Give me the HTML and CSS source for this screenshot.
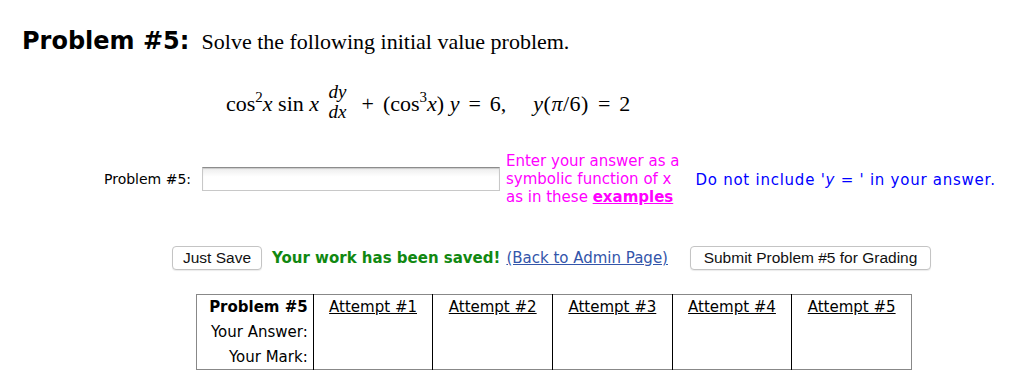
FILE: index.html
```html
<!DOCTYPE html>
<html lang="en">
<head>
<meta charset="UTF-8" />
<title>Problem #5</title>
<link rel="stylesheet" href="styles.css">
</head>
<body>

<div class="page">
  <h1 class="title"><span class="num">Problem #5:</span> <span class="lead">Solve the following initial value problem.</span></h1>

  <div class="equation">cos<sup>2</sup><i>x</i> sin <i>x</i> <span class="frac"><i>dy</i><br><i>dx</i></span><span class="op">+</span>(cos<sup>3</sup><i>x</i>) <i>y</i><span class="op">=</span>6,<span class="cond"><i>y</i>(<i>π</i>/6)</span><span class="op">=</span>2</div>

  <div class="answer-row">
    <label class="answer-label" for="ans">Problem #5:</label>
    <input class="answer-input" id="ans" type="text">
    <div class="hint">Enter your answer as a<br>symbolic function of x<br>as in these <a href="#">examples</a></div>
    <div class="note">Do not include '<i>y</i> = ' in your answer.</div>
  </div>

  <div class="actions">
    <button class="btn btn-save">Just Save</button>
    <span class="saved">Your work has been saved!</span>
    <a class="admin" href="#">(Back to Admin Page)</a>
    <button class="btn btn-submit">Submit Problem #5 for Grading</button>
  </div>

  <table class="attempts">
    <tr>
      <th>Problem #5</th>
      <td><a href="#">Attempt #1</a></td>
      <td><a href="#">Attempt #2</a></td>
      <td><a href="#">Attempt #3</a></td>
      <td><a href="#">Attempt #4</a></td>
      <td><a href="#">Attempt #5</a></td>
    </tr>
    <tr>
      <th class="sub">Your Answer:</th>
      <td></td><td></td><td></td><td></td><td></td>
    </tr>
    <tr>
      <th class="sub">Your Mark:</th>
      <td></td><td></td><td></td><td></td><td></td>
    </tr>
  </table>
</div>

</body>
</html>
```

FILE: styles.css
```css
* {
  margin: 0; padding: 0; box-sizing: border-box;
}
html, body {
  background: #fff;
  color: #000;
  font-family: "DejaVu Sans", Verdana, sans-serif;
}
.page {
  padding-top: 23px;
}

/* heading */
.title {
  padding-left: 22px;
  font-weight: normal;
  line-height: 30px;
  white-space: nowrap;
}
.title .num {
  font-weight: bold;
  font-size: 24px;
}
.title .lead {
  margin-left: 2px;
  font-family: "Liberation Serif", "Times New Roman", serif;
  font-size: 22px;
}

/* equation */
.equation {
  margin: 25px 0 0 226px;
  font-family: "Liberation Serif", "Times New Roman", serif;
  font-size: 22px;
  line-height: 44px;
  height: 44px;
  white-space: nowrap;
}
.equation sup {
  font-size: 15px;
  vertical-align: 9px;
  line-height: 0;
}
.frac {
  display: inline-block;
  vertical-align: middle;
  text-align: center;
  font-size: 19px;
  line-height: 20px;
  margin: 0 6px 0 4px;
  position: relative;
  top: -4px;
}
.equation .op {
  margin: 0 9px;
}
.equation .cond {
  margin-left: 27px;
  letter-spacing: 0.5px;
}

/* answer row */
.answer-row {
  margin-top: 24px;
  display: flex;
  align-items: center;
  padding-left: 104px;
  height: 58px;
}
.answer-label {
  font-size: 14px;
  width: 98px;
}
.answer-input {
  width: 298px;
  height: 24px;
  border: 1px solid #c8c8c8;
  border-top-color: #8c8c8c;
  background: linear-gradient(#ececec, #fff 40%);
  box-shadow: inset 0 1px 1px rgba(0, 0, 0, 0.15);
}
.hint {
  margin-left: 6px;
  color: #ff00ff;
  font-size: 15px;
  line-height: 18px;
  white-space: nowrap;
}
.hint a {
  color: #ff00ff;
  font-weight: bold;
}
.note {
  margin-left: 16px;
  margin-top: 2px;
  color: #0000ff;
  font-size: 15px;
  letter-spacing: 0.75px;
  white-space: nowrap;
}

/* buttons */
.actions {
  margin-top: 38px;
  padding-left: 172px;
  display: flex;
  align-items: center;
}
.btn {
  font-family: "Liberation Sans", Arial, sans-serif;
  font-size: 15.5px;
  height: 24px;
  padding: 0 9px;
  background: #fff;
  border: 1px solid #c4c4c4;
  border-radius: 4px;
  box-shadow: 0 1px 1px rgba(0, 0, 0, 0.08);
  color: #111;
}
.btn-save {
  width: 90px;
}
.btn-submit {
  width: 241px;
  margin-left: 22px;
}
.saved {
  margin-left: 10px;
  color: #118811;
  font-weight: bold;
  font-size: 15px;
}
.admin {
  margin-left: 6px;
  color: #3355aa;
  font-size: 15px;
}

/* attempts table */
.attempts {
  margin: 24px 0 0 196px;
  border-collapse: collapse;
  border: 1px solid #888;
  font-size: 15px;
  width: 716px;
}
.attempts th,
.attempts td {
  height: 25px;
  padding: 0 5px;
  border-left: 1px solid #000;
  text-align: center;
  vertical-align: middle;
  width: 120px;
}
.attempts th {
  width: 117px;
  text-align: right;
  border-left: none;
}
.attempts th.sub {
  font-weight: normal;
}
.attempts a {
  color: #000;
}
```
